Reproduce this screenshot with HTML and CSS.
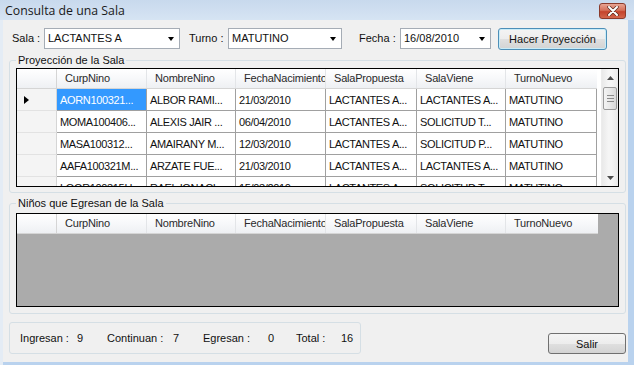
FILE: index.html
```html
<!DOCTYPE html>
<html>
<head>
<meta charset="utf-8">
<link rel="stylesheet" href="styles.css">
</head>
<body>
<div class="window">
  <div class="titlebar">
    <span class="title">Consulta de una Sala</span>
    <div class="close">
      <svg width="14" height="10" viewBox="0 0 14 10"><path d="M3 1 L11 9 M11 1 L3 9" stroke="#5a2a20" stroke-width="3.4" stroke-linecap="round"/><path d="M3 1 L11 9 M11 1 L3 9" stroke="#fff" stroke-width="2" stroke-linecap="round"/></svg>
    </div>
  </div>
  <div class="client">
    <div class="toolbar">
      <span class="lbl lbl-sala">Sala :</span>
      <div class="combo combo-sala"><span>LACTANTES A</span><span class="arrow"></span></div>
      <span class="lbl lbl-turno">Turno :</span>
      <div class="combo combo-turno"><span>MATUTINO</span><span class="arrow"></span></div>
      <span class="lbl lbl-fecha">Fecha :</span>
      <div class="combo combo-fecha"><span>16/08/2010</span><span class="arrow"></span></div>
      <button class="btn btn-proy">Hacer Proyección</button>
    </div>

    <fieldset class="group group1">
      <legend>Proyección de la Sala</legend>
      <div class="grid grid1">
        <div class="grid-body">
          <div class="row head">
            <div class="rh"></div>
            <div class="hc c1">CurpNino</div>
            <div class="hc c2">NombreNino</div>
            <div class="hc c3">FechaNacimiento</div>
            <div class="hc c4">SalaPropuesta</div>
            <div class="hc c5">SalaViene</div>
            <div class="hc c6">TurnoNuevo</div>
          </div>
          <div class="row">
            <div class="rh"><span class="marker"></span></div>
            <div class="dc c1 sel">AORN100321...</div>
            <div class="dc c2">ALBOR RAMI...</div>
            <div class="dc c3">21/03/2010</div>
            <div class="dc c4">LACTANTES A...</div>
            <div class="dc c5">LACTANTES A...</div>
            <div class="dc c6">MATUTINO</div>
          </div>
          <div class="row">
            <div class="rh"></div>
            <div class="dc c1">MOMA100406...</div>
            <div class="dc c2">ALEXIS JAIR ...</div>
            <div class="dc c3">06/04/2010</div>
            <div class="dc c4">LACTANTES A...</div>
            <div class="dc c5">SOLICITUD T...</div>
            <div class="dc c6">MATUTINO</div>
          </div>
          <div class="row">
            <div class="rh"></div>
            <div class="dc c1">MASA100312...</div>
            <div class="dc c2">AMAIRANY M...</div>
            <div class="dc c3">12/03/2010</div>
            <div class="dc c4">LACTANTES A...</div>
            <div class="dc c5">SOLICITUD P...</div>
            <div class="dc c6">MATUTINO</div>
          </div>
          <div class="row">
            <div class="rh"></div>
            <div class="dc c1">AAFA100321M...</div>
            <div class="dc c2">ARZATE FUE...</div>
            <div class="dc c3">21/03/2010</div>
            <div class="dc c4">LACTANTES A...</div>
            <div class="dc c5">LACTANTES A...</div>
            <div class="dc c6">MATUTINO</div>
          </div>
          <div class="row">
            <div class="rh"></div>
            <div class="dc c1">LOGR100315H...</div>
            <div class="dc c2">RAEL IGNACI...</div>
            <div class="dc c3">15/03/2010</div>
            <div class="dc c4">LACTANTES A...</div>
            <div class="dc c5">SOLICITUD T...</div>
            <div class="dc c6">MATUTINO</div>
          </div>
        </div>
        <div class="vscroll">
          <div class="sb-btn"><svg width="7" height="4" viewBox="0 0 7 4"><path d="M0 4 L3.5 0 L7 4Z" fill="#4d4d4d"/></svg></div>
          <div class="sb-track">
            <div class="sb-thumb"><span></span><span></span><span></span></div>
          </div>
          <div class="sb-btn"><svg width="7" height="4" viewBox="0 0 7 4"><path d="M0 0 L3.5 4 L7 0Z" fill="#4d4d4d"/></svg></div>
        </div>
      </div>
    </fieldset>

    <fieldset class="group group2">
      <legend>Niños que Egresan de la Sala</legend>
      <div class="grid grid2">
        <div class="row head">
          <div class="rh"></div>
          <div class="hc c1">CurpNino</div>
          <div class="hc c2">NombreNino</div>
          <div class="hc c3">FechaNacimiento</div>
          <div class="hc c4">SalaPropuesta</div>
          <div class="hc c5">SalaViene</div>
          <div class="hc c6">TurnoNuevo</div>
        </div>
      </div>
    </fieldset>

    <div class="footer">
      <div class="totals">
        <span class="t-lbl w-ing">Ingresan :</span><span class="t-val w30">9</span>
        <span class="t-lbl w-con">Continuan :</span><span class="t-val w30">7</span>
        <span class="t-lbl w-egr">Egresan :</span><span class="t-val w28">0</span>
        <span class="t-lbl w-tot">Total :</span><span class="t-val">16</span>
      </div>
      <button class="btn btn-salir">Salir</button>
    </div>
  </div>
</div>
</body>
</html>
```

FILE: styles.css
```css
* { box-sizing: border-box; }

body {
  margin: 0;
  width: 634px;
  height: 365px;
  overflow: hidden;
  font-family: "Liberation Sans", Arial, sans-serif;
  font-size: 11px;
  color: #111;
}

.window {
  width: 634px;
  height: 365px;
  display: flex;
  flex-direction: column;
  background: linear-gradient(90deg, #e4ecf5 0, #e4ecf5 3px, #b9d2ee 3px);
}

.titlebar {
  height: 20px;
  flex: none;
  display: flex;
  align-items: center;
  justify-content: space-between;
  padding: 0 8px 0 5px;
  background: linear-gradient(#c8d9ed, #d6e4f3);
}

.title {
  font-family: "Open Sans", "Noto Sans", sans-serif;
  font-size: 12.3px;
  color: #1a1a1a;
  margin-top: 1px;
}

.close {
  width: 27px;
  height: 16px;
  margin-top: 1px;
  border: 1px solid #8b3b2c;
  border-radius: 3px;
  background: linear-gradient(#e8a493, #d5705a 45%, #c4432d 55%, #d3664d);
  display: flex;
  align-items: center;
  justify-content: center;
}

.client {
  flex: 1;
  margin: 0 6px 3px 3px;
  background: #f0f0f0;
  display: flex;
  flex-direction: column;
}

/* toolbar */
.toolbar {
  display: flex;
  align-items: center;
  height: 22px;
  margin-top: 7px;
  padding-left: 9px;
}

.lbl { flex: none; }
.lbl-sala { width: 32px; }
.lbl-turno { width: 39px; margin-left: 9px; }
.lbl-fecha { width: 41px; margin-left: 17px; }

.combo {
  flex: none;
  height: 21px;
  background: #fff;
  border: 1px solid #a5acb5;
  display: flex;
  align-items: center;
  justify-content: space-between;
  padding: 0 5px 0 3px;
  font-size: 11px;
}
.combo-sala { width: 136px; }
.combo-turno { width: 114px; }
.combo-fecha { width: 91px; }

.arrow {
  width: 0;
  height: 0;
  border-left: 3.5px solid transparent;
  border-right: 3.5px solid transparent;
  border-top: 4px solid #000;
  margin-top: 2px;
}

.btn {
  font-family: "Liberation Sans", Arial, sans-serif;
  font-size: 11px;
  color: #111;
  border-radius: 3px;
  padding: 0;
  background: linear-gradient(#f4f4f4 0, #ededed 50%, #e0e0e0 50%, #d3d3d3 100%);
  border: 1px solid #707070;
}

.btn-proy {
  width: 109px;
  height: 22px;
  margin-left: 7px;
  margin-top: 2px;
  border-color: #4d8fb8;
  box-shadow: inset 0 0 0 1px #c9ecf8;
}

/* group boxes */
.group {
  margin: 0 2px 0 6px;
  border: 1px solid #d5dfe5;
  border-radius: 3px;
  padding: 0 6px;
  min-width: 0;
}

.group legend {
  padding: 0 2px;
  margin-left: 0;
  line-height: 13px;
  font-size: 11px;
}

.group1 {
  margin-top: 5px;
  height: 139px;
  padding-top: 1px;
}

.group2 {
  margin-top: 4px;
  height: 117px;
  padding-top: 3px;
}

/* grids */
.grid {
  width: 603px;
  border: 1px solid #000;
  overflow: hidden;
}

.grid1 {
  height: 119px;
  display: flex;
  background: #fff;
}

.grid2 {
  height: 94px;
  background: #ababab;
}

.grid-body {
  flex: 1;
  overflow: hidden;
}

.row {
  display: flex;
  height: 22px;
  flex: none;
}

.row.head {
  height: 20px;
  background: linear-gradient(#ffffff, #f7f8fa 50%, #eef0f3);
  border-bottom: 1px solid #d5d5d5;
  width: 580px;
}

.grid2 .row.head { width: 581px; }

.rh {
  width: 40px;
  flex: none;
  background: #f4f4f4;
  border-right: 1px solid #d5d5d5;
  border-bottom: 1px solid #e2e2e2;
  display: flex;
  align-items: center;
  padding-left: 7px;
}
.head .rh {
  background: transparent;
  border-bottom: none;
}

.marker {
  width: 0;
  height: 0;
  border-top: 4.5px solid transparent;
  border-bottom: 4.5px solid transparent;
  border-left: 5px solid #000;
}

.c1 { width: 90px; }
.c2 { width: 89px; }
.c3 { width: 90px; }
.c4 { width: 91px; }
.c5 { width: 89px; }
.c6 { width: 91px; }

.hc {
  flex: none;
  white-space: nowrap;
  overflow: hidden;
  padding-left: 8px;
  line-height: 19px;
  color: #2a2a2a;
  border-right: 1px solid #e3e5e8;
  font-size: 11px;
  letter-spacing: -0.2px;
}
.hc.c6 { border-right: none; }

.dc {
  flex: none;
  white-space: nowrap;
  overflow: hidden;
  padding-left: 3px;
  line-height: 22px;
  font-size: 11px;
  letter-spacing: -0.35px;
  border-right: 1px solid #a0a0a0;
  border-bottom: 1px solid #a0a0a0;
  background: #fff;
}

.dc.sel {
  background: #3399ff;
  color: #fff;
}

/* scrollbar */
.vscroll {
  width: 17px;
  flex: none;
  display: flex;
  flex-direction: column;
  background: linear-gradient(90deg, #e9e9e9, #f5f5f5 40%, #f5f5f5 60%, #e9e9e9);
  border-left: 1px solid #ececec;
}

.sb-btn {
  height: 17px;
  display: flex;
  align-items: center;
  justify-content: center;
}

.sb-track {
  flex: 1;
  padding: 1px 1px 0 1px;
}

.sb-thumb {
  height: 23px;
  border: 1px solid #9b9b9b;
  border-radius: 2px;
  background: linear-gradient(90deg, #f3f3f3, #e8e8e8 50%, #d8d8d8);
  display: flex;
  flex-direction: column;
  align-items: center;
  justify-content: center;
  gap: 2px;
}

.sb-thumb span {
  width: 7px;
  height: 1px;
  background: #8a8a8a;
}

/* footer */
.footer {
  display: flex;
  align-items: flex-end;
  margin-top: 8px;
  padding-left: 6px;
}

.totals {
  width: 352px;
  height: 32px;
  border: 1px solid #d5dfe5;
  border-radius: 3px;
  display: flex;
  align-items: center;
  padding-left: 10px;
  padding-bottom: 1px;
  font-size: 11px;
}

.t-lbl, .t-val { flex: none; }
.w-ing { width: 57px; }
.w-con { width: 66px; }
.w-egr { width: 65px; }
.w-tot { width: 45px; }
.w30 { width: 30px; }
.w28 { width: 28px; }

.btn-salir {
  width: 78px;
  height: 21px;
  margin-left: auto;
  margin-right: 2px;
  margin-bottom: 0;
}
```
